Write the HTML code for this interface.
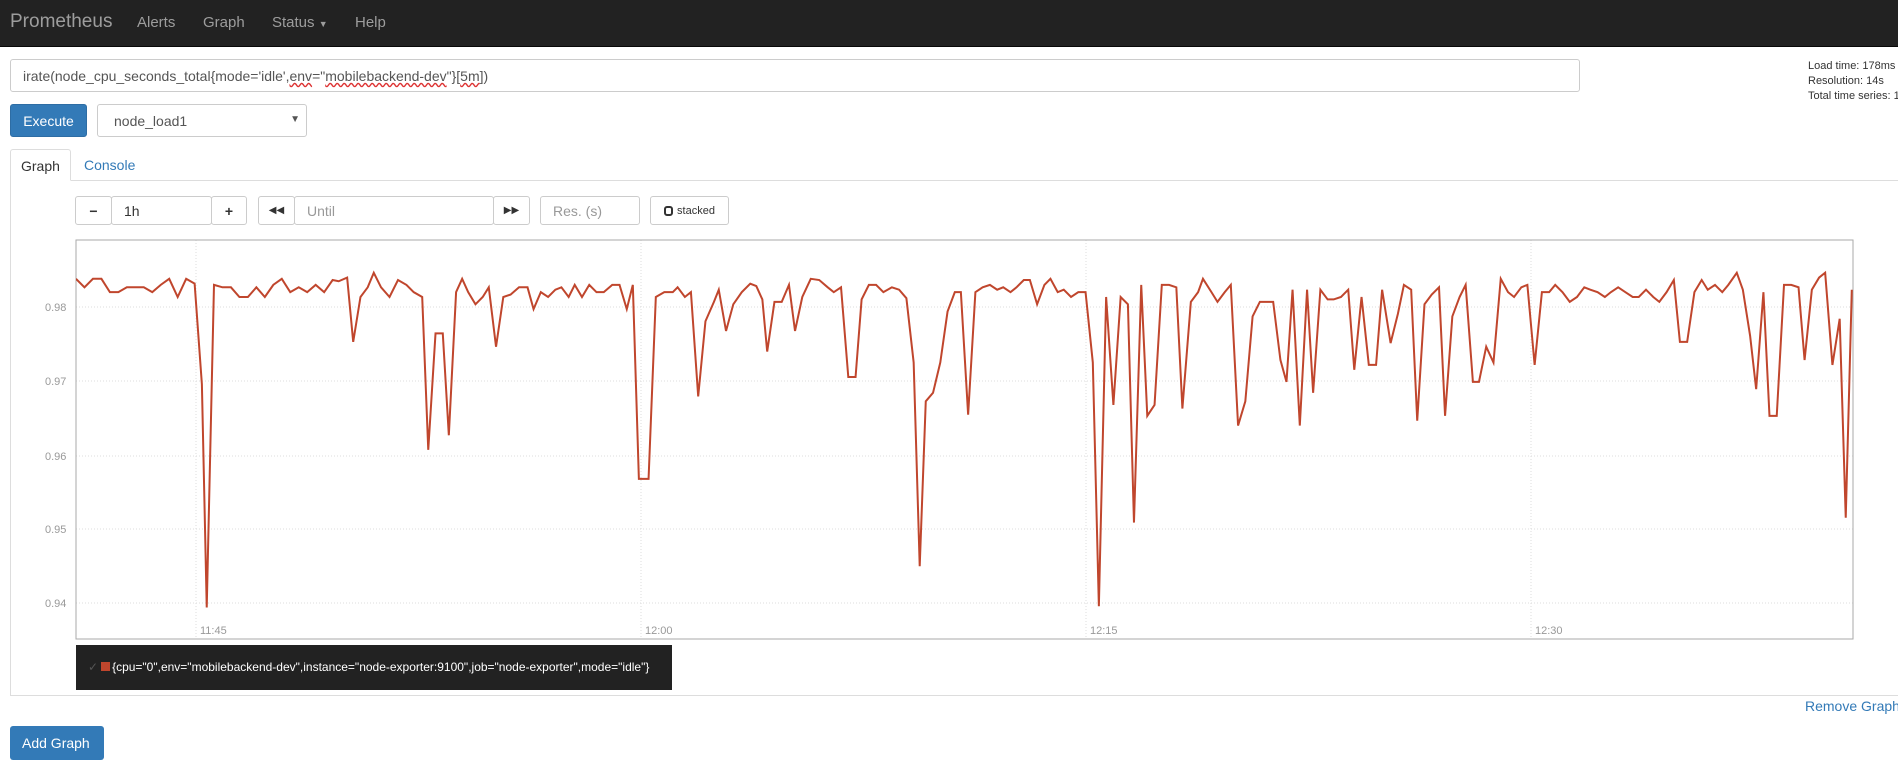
<!DOCTYPE html>
<html><head><meta charset="utf-8"><style>
*{box-sizing:border-box}
body{margin:0;width:1898px;height:756px;overflow:hidden;font-family:"Liberation Sans",sans-serif;font-size:14px;color:#333;background:#fff;position:relative}
.nav{position:absolute;left:0;top:0;width:1898px;height:47px;background:#222;border-bottom:1px solid #080808}
.nav span{position:absolute;top:14px;color:#9d9d9d;font-size:15px}
.abs{position:absolute}
.ta{left:10px;top:59px;width:1570px;height:33px;border:1px solid #ccc;border-radius:3px;padding:8px 12px;font-size:14px;color:#555}
.btn{border:1px solid #ccc;border-radius:3px;background:#fff;display:flex;align-items:center;justify-content:center;color:#333}
.grid{stroke:#ddd;stroke-dasharray:1 2;stroke-width:1}
</style></head><body>
<div class="nav">
<span style="left:10px;top:11px;font-size:19px">Prometheus</span>
<span style="left:137px">Alerts</span>
<span style="left:203px">Graph</span>
<span style="left:272px">Status <span style="position:static;font-size:9px">▼</span></span>
<span style="left:355px">Help</span>
</div>
<div class="abs ta">irate(node_cpu_seconds_total{mode='idle',<u style="text-decoration:underline wavy #d33">env</u>="<u style="text-decoration:underline wavy #d33">mobilebackend-dev</u>"}[<u style="text-decoration:underline wavy #d33">5m</u>])</div>
<div class="abs" style="left:1808px;top:59px;font-size:11px;line-height:15px;color:#333;white-space:nowrap">Load time: 178ms<br>Resolution: 14s<br>Total time series: 1</div>
<div class="abs" style="left:10px;top:104px;width:77px;height:33px;background:#337ab7;border:1px solid #2e6da4;border-radius:3px;color:#fff;display:flex;align-items:center;justify-content:center">Execute</div>
<div class="abs" style="left:97px;top:104px;width:210px;height:33px;border:1px solid #ccc;border-radius:3px;padding:8px 16px;color:#555">node_load1<span style="position:absolute;right:6px;top:9px;font-size:10px">▼</span></div>
<div class="abs" style="left:10px;top:180px;width:1888px;border-top:1px solid #ddd"></div>
<div class="abs" style="left:10px;top:149px;width:61px;height:32px;border:1px solid #ddd;border-bottom-color:#fff;border-radius:3px 3px 0 0;background:#fff;padding:8px 10px">Graph</div>
<div class="abs" style="left:84px;top:157px;color:#337ab7">Console</div>
<div class="abs" style="left:10px;top:180px;width:1888px;height:516px;border-left:1px solid #ddd;border-bottom:1px solid #ddd"></div>
<div class="abs btn" style="left:75px;top:196px;width:37px;height:29px;font-weight:bold">−</div>
<div class="abs btn" style="left:111px;top:196px;width:101px;height:29px;justify-content:flex-start;padding-left:12px">1h</div>
<div class="abs btn" style="left:211px;top:196px;width:36px;height:29px;font-weight:bold">+</div>
<div class="abs btn" style="left:258px;top:196px;width:37px;height:29px;font-size:10px">◀◀</div>
<div class="abs btn" style="left:294px;top:196px;width:200px;height:29px;justify-content:flex-start;padding-left:12px;color:#999">Until</div>
<div class="abs btn" style="left:493px;top:196px;width:37px;height:29px;font-size:10px">▶▶</div>
<div class="abs btn" style="left:540px;top:196px;width:100px;height:29px;justify-content:flex-start;padding-left:12px;color:#999">Res. (s)</div>
<div class="abs btn" style="left:650px;top:196px;width:79px;height:29px;font-size:11px"><span style="display:inline-block;width:9px;height:10px;border:2px solid #333;border-radius:3px;margin-right:4px"></span>stacked</div>
<svg class="abs" style="left:0;top:0" width="1898" height="756">
<g class="grid">
<line x1="76" x2="1853" y1="307" y2="307"/><line x1="76" x2="1853" y1="381" y2="381"/><line x1="76" x2="1853" y1="456" y2="456"/><line x1="76" x2="1853" y1="529" y2="529"/><line x1="76" x2="1853" y1="603" y2="603"/>
<line x1="196" x2="196" y1="240" y2="639"/><line x1="641" x2="641" y1="240" y2="639"/><line x1="1086" x2="1086" y1="240" y2="639"/><line x1="1531" x2="1531" y1="240" y2="639"/>
</g>
<rect x="76" y="240" width="1777" height="399" fill="none" stroke="#aaa"/>
<g font-size="11" fill="#999" font-family="Liberation Sans"><text x="45" y="311">0.98</text><text x="45" y="385">0.97</text><text x="45" y="460">0.96</text><text x="45" y="533">0.95</text><text x="45" y="607">0.94</text>
<text x="200" y="634">11:45</text><text x="645" y="634">12:00</text><text x="1090" y="634">12:15</text><text x="1535" y="634">12:30</text></g>
<svg x="76" y="240" width="1777" height="399" viewBox="63 199 1468 329" preserveAspectRatio="none">
<polyline fill="none" stroke="#c0462d" stroke-width="2" vector-effect="non-scaling-stroke" points="63,231 70,238 77,231 84,231 91,242 98,242 105,238 112,238 119,238 126,242 133,236 140,231 147,246 154,231 161,235 167,318 171,502 177,236 184,238 191,238 198,246 205,246 212,238 219,246 226,236 233,231 240,242 247,238 254,242 261,236 268,242 275,232 280,233 287,230 292,283 298,246 304,238 309,226 315,238 322,246 329,232 336,236 342,242 349,246 354,372 360,276 366,276 371,360 377,242 382,231 387,242 393,252 399,246 404,238 410,287 416,246 422,244 429,238 436,238 441,256 447,242 453,246 459,240 464,238 470,246 475,236 481,246 487,236 493,242 499,242 506,236 512,236 518,256 523,236 528,396 536,396 542,246 549,242 556,242 560,238 566,246 571,242 577,328 583,266 590,250 594,240 600,274 606,252 613,242 620,235 625,237 630,248 634,291 640,250 646,250 652,236 657,274 663,246 670,231 677,232 684,238 689,242 695,238 701,312 707,312 712,248 718,236 724,236 730,242 737,238 743,240 749,247 755,300 760,468 765,332 771,325 777,300 783,258 789,242 794,242 800,343 806,242 812,238 818,236 824,240 829,238 835,242 840,238 846,232 851,232 857,252 863,236 868,231 874,242 879,240 885,246 891,242 897,242 903,300 908,501 914,246 920,335 926,246 932,252 937,432 943,236 948,344 954,335 960,236 966,236 972,238 977,338 984,250 990,242 994,231 1001,242 1006,250 1012,242 1017,236 1023,352 1029,332 1035,262 1041,250 1046,250 1052,250 1058,298 1063,316 1068,240 1074,352 1080,240 1085,325 1091,240 1097,248 1102,248 1108,246 1114,240 1119,306 1125,246 1131,302 1137,302 1142,240 1149,284 1155,260 1160,236 1166,240 1171,348 1177,252 1183,244 1189,238 1194,344 1200,262 1206,246 1211,236 1217,316 1222,316 1228,287 1234,300 1240,231 1246,242 1251,246 1257,238 1262,236 1268,302 1274,242 1280,242 1285,236 1291,242 1297,250 1303,246 1309,238 1314,240 1320,242 1326,246 1331,242 1337,238 1343,242 1349,246 1354,246 1360,240 1366,246 1371,250 1377,242 1383,232 1388,283 1394,283 1400,242 1406,232 1411,240 1417,236 1423,242 1428,236 1435,226 1440,240 1446,278 1451,322 1457,242 1462,344 1468,344 1474,236 1480,236 1486,238 1491,298 1497,240 1503,230 1508,226 1514,302 1520,264 1525,428 1530,240"/>
</svg>
</svg>
<div class="abs" style="left:76px;top:645px;width:596px;height:45px;background:#222;color:#fff;font-size:12px;padding:15px 0 0 12px;white-space:nowrap"><span style="color:#555">✓</span><span style="display:inline-block;width:9px;height:9px;background:#c0462d;margin:0 2px 0 3px"></span>{cpu="0",env="mobilebackend-dev",instance="node-exporter:9100",job="node-exporter",mode="idle"}</div>
<div class="abs" style="left:1805px;top:698px;color:#337ab7;white-space:nowrap">Remove Graph</div>
<div class="abs" style="left:10px;top:726px;width:94px;height:34px;background:#337ab7;border-radius:3px;color:#fff;padding:9px 12px">Add Graph</div>
</body></html>
